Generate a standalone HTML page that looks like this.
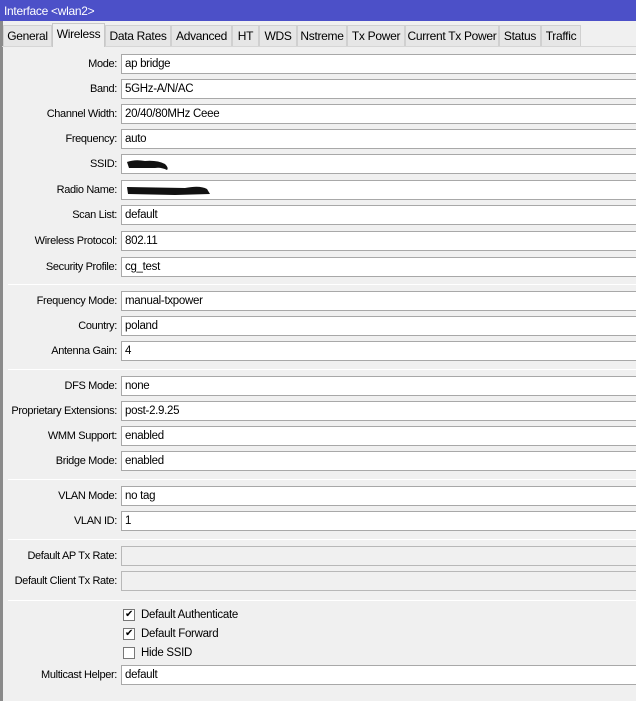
<!DOCTYPE html>
<html><head><meta charset="utf-8"><style>
*{margin:0;padding:0;box-sizing:border-box}
body{width:636px;height:701px;background:#f0f0f0;font-family:"Liberation Sans",Arial,sans-serif;font-size:11px;letter-spacing:-0.3px;color:#000;position:relative;overflow:hidden}
.title{position:absolute;left:0;top:0;width:636px;height:21px;background:#4c50c8;color:#fff;font-size:12px;line-height:22px;padding-left:4px}
.lb{position:absolute;left:0;top:21px;width:3px;height:680px;background:#8a8a8a}
.tab{position:absolute;top:25px;height:21px;background:#e6e6e6;border:1px solid #d0d0d0;border-bottom:none;font-size:12px;line-height:21px;text-align:center}
.tab.a{top:23px;height:24px;background:#f0f0f0;border-color:#c8c8c8;z-index:2}
.tabline{position:absolute;left:2px;top:46px;width:634px;height:1px;background:#d6d6d6}
.w{position:absolute;left:0;top:1px;width:636px;height:700px}
.l{position:absolute;left:0;width:117px;text-align:right;font-size:11px;line-height:20px;letter-spacing:-0.35px}
.i{position:absolute;left:121px;width:520px;height:20px;background:#fff;border:1px solid #a8a8a8;border-right:none;padding-left:3px;line-height:18px;font-size:11.5px}
.i.d{background:#f0f0f0;border-color:#b8b8b8}
.sep{position:absolute;left:8px;width:628px;height:1px;background:#d8d8d8;border-bottom:1px solid #fff}
.cb{position:absolute;left:123px;width:12px;height:12px;border:1px solid #777;background:#fff;font-size:10px;line-height:10px;text-align:center}
.ct{position:absolute;left:141px;font-size:11.5px;line-height:14px}
</style></head><body>
<div class="title">Interface &lt;wlan2&gt;</div>
<div class="lb"></div>
<div class="tabline"></div>
<div class="tab" style="left:3px;width:49px">General</div>
<div class="tab a" style="left:52px;width:53px">Wireless</div>
<div class="tab" style="left:105px;width:66px">Data Rates</div>
<div class="tab" style="left:171px;width:61px">Advanced</div>
<div class="tab" style="left:232px;width:27px">HT</div>
<div class="tab" style="left:259px;width:38px">WDS</div>
<div class="tab" style="left:297px;width:50px">Nstreme</div>
<div class="tab" style="left:347px;width:58px">Tx Power</div>
<div class="tab" style="left:405px;width:94px">Current Tx Power</div>
<div class="tab" style="left:499px;width:42px">Status</div>
<div class="tab" style="left:541px;width:40px">Traffic</div>
<div class="w">
<div class="l" style="top:53px">Mode:</div><div class="i" style="top:53px">ap bridge</div>
<div class="l" style="top:78px">Band:</div><div class="i" style="top:78px">5GHz-A/N/AC</div>
<div class="l" style="top:103px">Channel Width:</div><div class="i" style="top:103px">20/40/80MHz Ceee</div>
<div class="l" style="top:128px">Frequency:</div><div class="i" style="top:128px">auto</div>
<div class="l" style="top:153px">SSID:</div><div class="i" style="top:153px"><svg width="50" height="14" style="position:absolute;left:3px;top:3px"><path d="M2 4 Q10 1 20 3 Q32 2 40 6 Q44 10 42 12 Q36 9 30 10 L4 10 Z" fill="#111"/></svg></div>
<div class="l" style="top:179px">Radio Name:</div><div class="i" style="top:179px"><svg width="90" height="14" style="position:absolute;left:3px;top:3px"><path d="M2 3 L60 4 Q75 1 82 5 L85 10 L50 11 L3 10 Z" fill="#111"/></svg></div>
<div class="l" style="top:204px">Scan List:</div><div class="i" style="top:204px">default</div>
<div class="l" style="top:230px">Wireless Protocol:</div><div class="i" style="top:230px">802.11</div>
<div class="l" style="top:256px">Security Profile:</div><div class="i" style="top:256px">cg_test</div>
<div class="sep" style="top:283px"></div>
<div class="l" style="top:290px">Frequency Mode:</div><div class="i" style="top:290px">manual-txpower</div>
<div class="l" style="top:315px">Country:</div><div class="i" style="top:315px">poland</div>
<div class="l" style="top:340px">Antenna Gain:</div><div class="i" style="top:340px">4</div>
<div class="sep" style="top:368px"></div>
<div class="l" style="top:375px">DFS Mode:</div><div class="i" style="top:375px">none</div>
<div class="l" style="top:400px">Proprietary Extensions:</div><div class="i" style="top:400px">post-2.9.25</div>
<div class="l" style="top:425px">WMM Support:</div><div class="i" style="top:425px">enabled</div>
<div class="l" style="top:450px">Bridge Mode:</div><div class="i" style="top:450px">enabled</div>
<div class="sep" style="top:478px"></div>
<div class="l" style="top:485px">VLAN Mode:</div><div class="i" style="top:485px">no tag</div>
<div class="l" style="top:510px">VLAN ID:</div><div class="i" style="top:510px">1</div>
<div class="sep" style="top:538px"></div>
<div class="l" style="top:545px">Default AP Tx Rate:</div><div class="i d" style="top:545px"></div>
<div class="l" style="top:570px">Default Client Tx Rate:</div><div class="i d" style="top:570px"></div>
<div class="sep" style="top:599px"></div>
<div class="cb" style="top:608px">✔</div><div class="ct" style="top:607px">Default Authenticate</div>
<div class="cb" style="top:627px">✔</div><div class="ct" style="top:626px">Default Forward</div>
<div class="cb" style="top:646px"></div><div class="ct" style="top:645px">Hide SSID</div>
<div class="l" style="top:664px">Multicast Helper:</div><div class="i" style="top:664px">default</div>
</div>
</body></html>
